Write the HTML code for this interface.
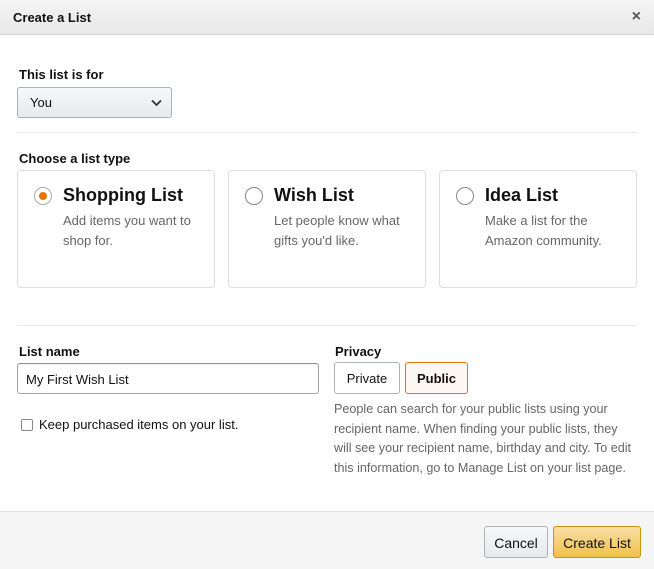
<!DOCTYPE html>
<html><head><style>
*{box-sizing:border-box;margin:0;padding:0}
body{width:654px;height:569px;background:#fff;font-family:"Liberation Sans",Arial,sans-serif;color:#111;position:relative;overflow:hidden}
.a{position:absolute}
.hdr{left:0;top:0;width:654px;height:35px;background:linear-gradient(#f4f4f4,#e8e8e8);border-bottom:1px solid #d5d5d5;font-weight:bold;font-size:13px;padding:10px 13px}
.lbl{font-weight:bold;font-size:13px}
.hr{height:1px;background:#e7e7e7;left:17px;width:620px}
.card{border:1px solid #ddd;border-radius:4px;top:170px;width:198px;height:118px}
.card .r{position:absolute;left:16px;top:16px;width:18px;height:18px;border:1px solid #888;border-radius:50%;background:#fff}
.card .t{position:absolute;left:45px;top:14px;font-size:18px;font-weight:bold}
.card .d{position:absolute;left:45px;top:40px;font-size:13px;color:#666;line-height:20px;width:140px}
.btn{border-radius:3px;font-size:13px;text-align:center}
</style></head><body>
<div class="a hdr">Create a List<span style="position:absolute;right:13px;top:8px;font-size:16px;color:#555">×</span></div>
<div class="a lbl" style="left:19px;top:67px">This list is for</div>
<div class="a" style="left:17px;top:87px;width:155px;height:31px;border:1px solid #adb1b8;border-radius:3px;background:linear-gradient(#f7f8fa,#e7e9ec);font-size:13px;padding:7px 12px">You
<svg style="position:absolute;right:9px;top:11px" width="11" height="8" viewBox="0 0 11 8"><path d="M1 1.5L5.5 6L10 1.5" stroke="#333" stroke-width="1.8" fill="none"/></svg></div>
<div class="a hr" style="top:132px"></div>
<div class="a lbl" style="left:19px;top:151px">Choose a list type</div>
<div class="a card" style="left:17px"><div class="r" style="border-color:#aaa"><div style="position:absolute;left:4px;top:4px;width:8px;height:8px;border-radius:50%;background:#e77600"></div></div><div class="t">Shopping List</div><div class="d">Add items you want to shop for.</div></div>
<div class="a card" style="left:228px"><div class="r"></div><div class="t">Wish List</div><div class="d">Let people know what gifts you'd like.</div></div>
<div class="a card" style="left:439px"><div class="r"></div><div class="t">Idea List</div><div class="d">Make a list for the Amazon community.</div></div>
<div class="a hr" style="top:325px"></div>
<div class="a lbl" style="left:19px;top:344px">List name</div>
<div class="a" style="left:17px;top:363px;width:302px;height:31px;border:1px solid #a6a6a6;border-top-color:#949494;border-radius:3px;font-size:13px;padding:8px 8px;box-shadow:inset 0 1px 0 rgba(0,0,0,.07)">My First Wish List</div>
<div class="a" style="left:21px;top:419px;width:12px;height:12px;border:1px solid #888;border-radius:2px"></div>
<div class="a" style="left:39px;top:417px;font-size:13px">Keep purchased items on your list.</div>
<div class="a lbl" style="left:335px;top:344px">Privacy</div>
<div class="a btn" style="left:334px;top:362px;width:66px;height:32px;border:1px solid #adb1b8;padding-top:8px">Private</div>
<div class="a btn" style="left:405px;top:362px;width:63px;height:32px;border:1px solid #e77600;background:#fef8f2;font-weight:bold;padding-top:8px">Public</div>
<div class="a" style="left:334px;top:400px;width:300px;font-size:12.6px;color:#666;line-height:19.5px">People can search for your public lists using your<br>recipient name. When finding your public lists, they<br>will see your recipient name, birthday and city. To edit<br>this information, go to Manage List on your list page.</div>
<div class="a" style="left:0;top:511px;width:654px;height:58px;background:#f5f5f5;border-top:1px solid #e3e3e3"></div>
<div class="a btn" style="left:484px;top:526px;width:64px;height:32px;border:1px solid #adb1b8;background:linear-gradient(#f7f8fa,#e7e9ec);padding-top:8px;font-size:14px">Cancel</div>
<div class="a btn" style="left:553px;top:526px;width:88px;height:32px;border:1px solid #c89411;background:linear-gradient(#f7dfa5,#f0c14b);padding-top:8px;font-size:14px">Create List</div>
</body></html>
